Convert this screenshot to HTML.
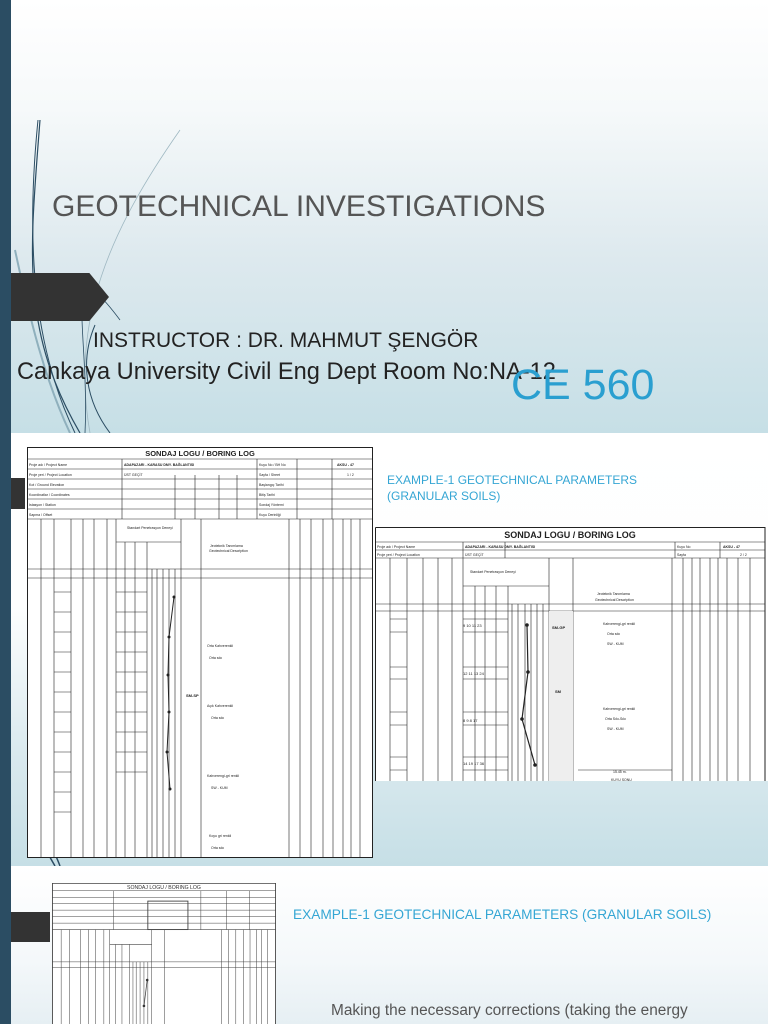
<!DOCTYPE html>
<html style="width:768px;height:1024px;overflow:hidden"><head><meta charset="utf-8">
<style>
*{margin:0;padding:0;box-sizing:border-box}
body{width:768px;height:1024px;overflow:hidden;position:relative;font-family:"Liberation Sans",sans-serif;background:#fff}
.slide{position:absolute;left:0;width:768px;height:433px;overflow:hidden}
.s1{top:0;background:linear-gradient(#fff 0%,#f6f9fa 25%,#dde9ee 60%,#c6dfe6 100%)}
.s2{top:433px;background:linear-gradient(#fff 0%,#fdfefe 40%,#d9e9ee 75%,#c6dfe6 100%)}
.s3{top:866px;height:158px;background:linear-gradient(#fff 0%,#f4f8fa 60%,#e6eff3 100%)}
.bar{position:absolute;left:0;top:0;width:11px;height:1024px;background:#2b4d63}
.tab{position:absolute;left:0;background:#333;clip-path:polygon(0 0,82% 0,100% 50%,82% 100%,0 100%)}
.t{position:absolute;white-space:nowrap}
svg text{font-family:"Liberation Sans",sans-serif}
</style></head><body>
<div class="slide s1">
<svg width="768" height="433" style="position:absolute;left:0;top:0" fill="none">
<path d="M40 120 C 30 250, 20 330, 80 433" stroke="#2b4d63" stroke-width="1.2"/>
<path d="M38 120 C 25 250, 35 350, 75 433" stroke="#2b4d63" stroke-width="1"/>
<path d="M180 130 C 110 230, 70 320, 90 433" stroke="#9fb8c2" stroke-width="0.8"/>
<path d="M120 320 C 60 240, 90 330, 85 433" stroke="#2b4d63" stroke-width="0.8"/>
<path d="M15 250 C 30 320, 45 380, 70 433" stroke="#8fb0bd" stroke-width="2"/>
<path d="M95 325 C 80 360, 85 400, 110 433" stroke="#2b4d63" stroke-width="1"/>
</svg>
<div class="tab" style="top:273px;width:109px;height:48px"></div>
<div class="t" style="left:52px;top:190px;font-size:30px;color:#555">GEOTECHNICAL INVESTIGATIONS</div>
<div class="t" style="left:93px;top:329px;font-size:21px;color:#222">INSTRUCTOR : DR. MAHMUT ŞENGÖR</div>
<div class="t" style="left:17px;top:359px;font-size:23.6px;color:#222">Cankaya University Civil Eng Dept Room No:NA-12</div>
<div class="t" style="left:511px;top:361px;font-size:43px;color:#2a9fd0">CE 560</div>
</div>

<div class="slide s2">
<svg width="768" height="433" style="position:absolute;left:0;top:0" fill="none">
<path d="M40 400 C 45 415, 50 425, 55 433" stroke="#2b4d63" stroke-width="1.5"/>
<path d="M48 400 C 52 415, 57 425, 60 433" stroke="#2b4d63" stroke-width="1.5"/>
</svg>
<div class="tab" style="top:45px;width:25px;height:31px;clip-path:none"></div>
<svg style="position:absolute;left:27px;top:14px;background:#fff" width="346" height="411" viewBox="0 0 346 411" stroke="#222" stroke-width="0.6" fill="none">
<rect x="0.5" y="0.5" width="345" height="410" stroke-width="1"/>
<text x="173" y="9" font-size="7.5" font-weight="bold" fill="#222" stroke="none" text-anchor="middle">SONDAJ LOGU / BORING LOG</text>
<path d="M0 12H346M0 22H346M0 32H346M0 42H346M0 52H346M0 62H346M0 72H346M0 122H346M0 131H346"/>
<path d="M95 12V72M230 12V72M270 12V72M305 12V72M148 28V72M168 28V72M192 28V72M210 28V72"/>
<path d="M14 72V411M27 72V411M44 72V411M56 72V411M67 72V411M80 72V411M89 72V411M98 95V411M108 95V411M120 95V411M125 122V411M130 122V411M136 122V411M142 122V411M148 122V411M154 72V411M174 72V411M262 72V411M273 72V411M284 72V411M296 72V411M306 72V411M316 72V411M324 72V411M333 72V411M89 95H154"/>
<g fill="#222" stroke="none" font-size="3.5">
<text x="2" y="19">Proje adı   / Project Name</text><text x="97" y="19" font-weight="bold">ADAPAZARI - KARASU DMY. BAĞLANTISI</text>
<text x="2" y="29">Proje yeri  / Project Location</text><text x="97" y="29">ÜST GEÇİT</text>
<text x="2" y="39">Kot   / Ground Elevation</text><text x="2" y="49">Koordinatlar / Coordinates</text>
<text x="2" y="59">Istasyon / Station</text><text x="2" y="69">Sapma / Offset</text>
<text x="232" y="19">Kuyu No   / BH No</text><text x="310" y="19" font-weight="bold">AKSU - 47</text>
<text x="232" y="29">Sayfa  / Sheet</text><text x="320" y="29">1 / 2</text>
<text x="232" y="39">Başlangıç Tarihi</text><text x="232" y="49">Bitiş Tarihi</text>
<text x="232" y="59">Sondaj Yöntemi</text><text x="232" y="69">Kuyu Derinliği</text>
<text x="100" y="82">Standart Penetrasyon Deneyi</text>
<text x="183" y="100">Jeoteknik Tanımlama</text><text x="182" y="105">Geotechnical Description</text>
<text x="159" y="250" font-weight="bold" font-size="4">SM-SP</text>
<text x="180" y="200">Orta Kahverenkli</text><text x="182" y="212">Orta sıkı</text>
<text x="180" y="260">Açık Kahverenkli</text><text x="184" y="272">Orta sıkı</text>
<text x="180" y="330">Kahverengi-gri renkli</text><text x="184" y="342">SW - KUM</text>
<text x="182" y="390">Koyu gri renkli</text><text x="184" y="402">Orta sıkı</text>
</g>
<path d="M147 150 L142 190 L141 228 L142 265 L140 305 L143 342" stroke-width="1"/>
<g fill="#222" stroke="none"><circle cx="147" cy="150" r="1.5"/><circle cx="142" cy="190" r="1.5"/><circle cx="141" cy="228" r="1.5"/><circle cx="142" cy="265" r="1.5"/><circle cx="140" cy="305" r="1.5"/><circle cx="143" cy="342" r="1.5"/></g>
<path d="M27 145H44M27 165H44M27 185H44M27 205H44M27 225H44M27 245H44M27 265H44M27 285H44M27 305H44M27 325H44M27 345H44M27 365H44M89 145H120M89 165H120M89 185H120M89 205H120M89 225H120M89 245H120M89 265H120M89 285H120M89 305H120M89 325H120"/>
</svg>
<div class="t" style="left:387px;top:39px;font-size:12px;color:#35a6d4;line-height:16px">EXAMPLE-1 GEOTECHNICAL PARAMETERS<br>(GRANULAR SOILS)</div>
<svg style="position:absolute;left:375px;top:94px;background:#fff" width="393" height="254" viewBox="0 0 393 254" stroke="#222" stroke-width="0.6" fill="none">
<path d="M0.5 0.5H390V254M0.5 0.5V254" stroke-width="1"/>
<text x="195" y="11" font-size="9" font-weight="bold" fill="#222" stroke="none" text-anchor="middle">SONDAJ LOGU / BORING LOG</text>
<path d="M0 15H390M0 23H390M0 31H390M0 77H390M0 84H390"/>
<path d="M88 15V31M130 15V31M300 15V31M345 15V31"/>
<path d="M15 31V254M32 31V254M48 31V254M63 31V254M77 31V254M88 31V254M100 59V254M110 59V254M121 59V254M133 59V254M137 77V254M143 77V254M150 77V254M156 77V254M162 77V254M168 77V254M174 31V254M198 31V254M297 31V254M308 31V254M317 31V254M325 31V254M335 31V254M343 31V254M352 31V254M363 31V254M375 31V254M88 59H174"/>
<rect x="174" y="84" width="24" height="170" fill="#eee" stroke="none"/>
<g fill="#222" stroke="none" font-size="3.5">
<text x="2" y="21">Proje adı   / Project Name</text><text x="90" y="21" font-weight="bold">ADAPAZARI - KARASU DMY. BAĞLANTISI</text>
<text x="2" y="29">Proje yeri  / Project Location</text><text x="90" y="29">ÜST GEÇİT</text>
<text x="302" y="21">Kuyu No</text><text x="348" y="21" font-weight="bold">AKSU - 47</text>
<text x="302" y="29">Sayfa</text><text x="365" y="29">2 / 2</text>
<text x="95" y="46">Standart Penetrasyon Deneyi</text>
<text x="222" y="68">Jeoteknik Tanımlama</text><text x="220" y="74">Geotechnical Description</text>
<text x="177" y="102" font-weight="bold" font-size="4">SM-GP</text><text x="180" y="166" font-weight="bold" font-size="4">SM</text>
<text x="228" y="98">Kahverengi-gri renkli</text><text x="232" y="108">Orta sıkı</text><text x="232" y="118">SW - KUM</text>
<text x="228" y="183">Kahverengi-gri renkli</text><text x="230" y="193">Orta Sıkı-Sıkı</text><text x="232" y="203">SW - KUM</text>
<text x="238" y="246">15.45 m.</text><text x="236" y="254">KUYU SONU</text>
<text x="88" y="100" font-size="4">9   10   11    23</text><text x="88" y="148" font-size="4">12  11   13    24</text>
<text x="88" y="195" font-size="4">8    9    8     17</text><text x="88" y="238" font-size="4">14  19   17    36</text>
</g>
<path d="M152 98 L153 145 L147 192 L160 238" stroke-width="1.2"/>
<g fill="#222" stroke="none"><circle cx="152" cy="98" r="1.8"/><circle cx="153" cy="145" r="1.8"/><circle cx="147" cy="192" r="1.8"/><circle cx="160" cy="238" r="1.8"/></g>
<path d="M15 92H32M15 105H32M15 140H32M15 152H32M15 185H32M15 198H32M15 230H32M15 243H32M88 92H133M88 105H133M88 140H133M88 152H133M88 185H133M88 198H133M88 230H133M88 243H133M203 243H297"/>
</svg>
</div>

<div class="slide s3">
<div class="tab" style="top:46px;width:50px;height:30px;clip-path:none"></div>
<svg style="position:absolute;left:52px;top:17px;background:#fff" width="224" height="141" viewBox="0 0 346 218" stroke="#444" stroke-width="0.8" fill="none">
<path d="M0.5 218V0.5H345.5V218" stroke-width="1.4"/>
<text x="173" y="9" font-size="8" fill="#333" stroke="none" text-anchor="middle">SONDAJ LOGU / BORING LOG</text>
<path d="M0 12H346M0 22H346M0 32H346M0 42H346M0 52H346M0 62H346M0 72H346M0 122H346M0 131H346"/>
<path d="M95 12V72M230 12V72M270 12V72M305 12V72"/>
<rect x="148" y="28" width="62" height="44" stroke-width="1.4"/>
<path d="M14 72V218M27 72V218M44 72V218M56 72V218M67 72V218M80 72V218M89 72V218M98 95V218M108 95V218M120 95V218M125 122V218M130 122V218M136 122V218M142 122V218M148 122V218M154 72V218M174 72V218M262 72V218M273 72V218M284 72V218M296 72V218M306 72V218M316 72V218M324 72V218M333 72V218M89 95H154"/>
<path d="M147 150 L142 190" stroke-width="1.2"/>
<g fill="#333" stroke="none"><circle cx="147" cy="150" r="2"/><circle cx="142" cy="190" r="2"/></g>
</svg>
<div class="t" style="left:293px;top:41px;font-size:13.7px;color:#35a6d4">EXAMPLE-1 GEOTECHNICAL PARAMETERS (GRANULAR SOILS)</div>
<div class="t" style="left:331px;top:136px;font-size:15.4px;color:#555;line-height:18px">Making the necessary corrections (taking the energy</div>
</div>
<div class="bar"></div>
</body></html>
